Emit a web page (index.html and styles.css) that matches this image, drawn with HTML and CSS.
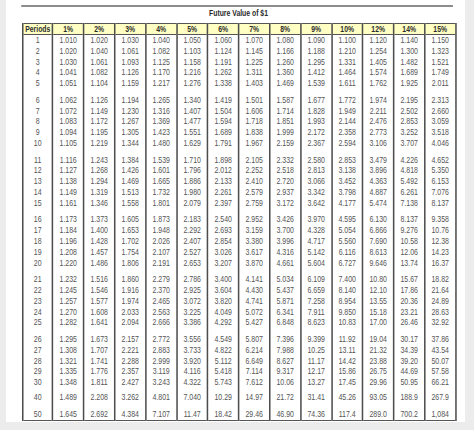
FILE: index.html
```html
<!DOCTYPE html>
<html>
<head>
<meta charset="utf-8">
<link rel="stylesheet" href="styles.css">
</head>
<body>
<div class="panel">
  <div class="sheet">
  <div class="rule"></div>
  <div class="title">Future Value of $1</div>
  <table class="fv">
    <colgroup><col class="cp"><col span="13" class="cr"></colgroup>
    <thead>
      <tr><th>Periods</th><th>1%</th><th>2%</th><th>3%</th><th>4%</th><th>5%</th><th>6%</th><th>7%</th><th>8%</th><th>9%</th><th>10%</th><th>12%</th><th>14%</th><th>15%</th></tr>
    </thead>
    <tbody>
      <tr><td>1</td><td>1.010</td><td>1.020</td><td>1.030</td><td>1.040</td><td>1.050</td><td>1.060</td><td>1.070</td><td>1.080</td><td>1.090</td><td>1.100</td><td>1.120</td><td>1.140</td><td>1.150</td></tr>
      <tr><td>2</td><td>1.020</td><td>1.040</td><td>1.061</td><td>1.082</td><td>1.103</td><td>1.124</td><td>1.145</td><td>1.166</td><td>1.188</td><td>1.210</td><td>1.254</td><td>1.300</td><td>1.323</td></tr>
      <tr><td>3</td><td>1.030</td><td>1.061</td><td>1.093</td><td>1.125</td><td>1.158</td><td>1.191</td><td>1.225</td><td>1.260</td><td>1.295</td><td>1.331</td><td>1.405</td><td>1.482</td><td>1.521</td></tr>
      <tr><td>4</td><td>1.041</td><td>1.082</td><td>1.126</td><td>1.170</td><td>1.216</td><td>1.262</td><td>1.311</td><td>1.360</td><td>1.412</td><td>1.464</td><td>1.574</td><td>1.689</td><td>1.749</td></tr>
      <tr><td>5</td><td>1.051</td><td>1.104</td><td>1.159</td><td>1.217</td><td>1.276</td><td>1.338</td><td>1.403</td><td>1.469</td><td>1.539</td><td>1.611</td><td>1.762</td><td>1.925</td><td>2.011</td></tr>
      <tr class="gs"><td>6</td><td>1.062</td><td>1.126</td><td>1.194</td><td>1.265</td><td>1.340</td><td>1.419</td><td>1.501</td><td>1.587</td><td>1.677</td><td>1.772</td><td>1.974</td><td>2.195</td><td>2.313</td></tr>
      <tr><td>7</td><td>1.072</td><td>1.149</td><td>1.230</td><td>1.316</td><td>1.407</td><td>1.504</td><td>1.606</td><td>1.714</td><td>1.828</td><td>1.949</td><td>2.211</td><td>2.502</td><td>2.660</td></tr>
      <tr><td>8</td><td>1.083</td><td>1.172</td><td>1.267</td><td>1.369</td><td>1.477</td><td>1.594</td><td>1.718</td><td>1.851</td><td>1.993</td><td>2.144</td><td>2.476</td><td>2.853</td><td>3.059</td></tr>
      <tr><td>9</td><td>1.094</td><td>1.195</td><td>1.305</td><td>1.423</td><td>1.551</td><td>1.689</td><td>1.838</td><td>1.999</td><td>2.172</td><td>2.358</td><td>2.773</td><td>3.252</td><td>3.518</td></tr>
      <tr><td>10</td><td>1.105</td><td>1.219</td><td>1.344</td><td>1.480</td><td>1.629</td><td>1.791</td><td>1.967</td><td>2.159</td><td>2.367</td><td>2.594</td><td>3.106</td><td>3.707</td><td>4.046</td></tr>
      <tr class="gs"><td>11</td><td>1.116</td><td>1.243</td><td>1.384</td><td>1.539</td><td>1.710</td><td>1.898</td><td>2.105</td><td>2.332</td><td>2.580</td><td>2.853</td><td>3.479</td><td>4.226</td><td>4.652</td></tr>
      <tr><td>12</td><td>1.127</td><td>1.268</td><td>1.426</td><td>1.601</td><td>1.796</td><td>2.012</td><td>2.252</td><td>2.518</td><td>2.813</td><td>3.138</td><td>3.896</td><td>4.818</td><td>5.350</td></tr>
      <tr><td>13</td><td>1.138</td><td>1.294</td><td>1.469</td><td>1.665</td><td>1.886</td><td>2.133</td><td>2.410</td><td>2.720</td><td>3.066</td><td>3.452</td><td>4.363</td><td>5.492</td><td>6.153</td></tr>
      <tr><td>14</td><td>1.149</td><td>1.319</td><td>1.513</td><td>1.732</td><td>1.980</td><td>2.261</td><td>2.579</td><td>2.937</td><td>3.342</td><td>3.798</td><td>4.887</td><td>6.261</td><td>7.076</td></tr>
      <tr><td>15</td><td>1.161</td><td>1.346</td><td>1.558</td><td>1.801</td><td>2.079</td><td>2.397</td><td>2.759</td><td>3.172</td><td>3.642</td><td>4.177</td><td>5.474</td><td>7.138</td><td>8.137</td></tr>
      <tr class="gs"><td>16</td><td>1.173</td><td>1.373</td><td>1.605</td><td>1.873</td><td>2.183</td><td>2.540</td><td>2.952</td><td>3.426</td><td>3.970</td><td>4.595</td><td>6.130</td><td>8.137</td><td>9.358</td></tr>
      <tr><td>17</td><td>1.184</td><td>1.400</td><td>1.653</td><td>1.948</td><td>2.292</td><td>2.693</td><td>3.159</td><td>3.700</td><td>4.328</td><td>5.054</td><td>6.866</td><td>9.276</td><td>10.76</td></tr>
      <tr><td>18</td><td>1.196</td><td>1.428</td><td>1.702</td><td>2.026</td><td>2.407</td><td>2.854</td><td>3.380</td><td>3.996</td><td>4.717</td><td>5.560</td><td>7.690</td><td>10.58</td><td>12.38</td></tr>
      <tr><td>19</td><td>1.208</td><td>1.457</td><td>1.754</td><td>2.107</td><td>2.527</td><td>3.026</td><td>3.617</td><td>4.316</td><td>5.142</td><td>6.116</td><td>8.613</td><td>12.06</td><td>14.23</td></tr>
      <tr><td>20</td><td>1.220</td><td>1.486</td><td>1.806</td><td>2.191</td><td>2.653</td><td>3.207</td><td>3.870</td><td>4.661</td><td>5.604</td><td>6.727</td><td>9.646</td><td>13.74</td><td>16.37</td></tr>
      <tr class="gs"><td>21</td><td>1.232</td><td>1.516</td><td>1.860</td><td>2.279</td><td>2.786</td><td>3.400</td><td>4.141</td><td>5.034</td><td>6.109</td><td>7.400</td><td>10.80</td><td>15.67</td><td>18.82</td></tr>
      <tr><td>22</td><td>1.245</td><td>1.546</td><td>1.916</td><td>2.370</td><td>2.925</td><td>3.604</td><td>4.430</td><td>5.437</td><td>6.659</td><td>8.140</td><td>12.10</td><td>17.86</td><td>21.64</td></tr>
      <tr><td>23</td><td>1.257</td><td>1.577</td><td>1.974</td><td>2.465</td><td>3.072</td><td>3.820</td><td>4.741</td><td>5.871</td><td>7.258</td><td>8.954</td><td>13.55</td><td>20.36</td><td>24.89</td></tr>
      <tr><td>24</td><td>1.270</td><td>1.608</td><td>2.033</td><td>2.563</td><td>3.225</td><td>4.049</td><td>5.072</td><td>6.341</td><td>7.911</td><td>9.850</td><td>15.18</td><td>23.21</td><td>28.63</td></tr>
      <tr><td>25</td><td>1.282</td><td>1.641</td><td>2.094</td><td>2.666</td><td>3.386</td><td>4.292</td><td>5.427</td><td>6.848</td><td>8.623</td><td>10.83</td><td>17.00</td><td>26.46</td><td>32.92</td></tr>
      <tr class="gs"><td>26</td><td>1.295</td><td>1.673</td><td>2.157</td><td>2.772</td><td>3.556</td><td>4.549</td><td>5.807</td><td>7.396</td><td>9.399</td><td>11.92</td><td>19.04</td><td>30.17</td><td>37.86</td></tr>
      <tr><td>27</td><td>1.308</td><td>1.707</td><td>2.221</td><td>2.883</td><td>3.733</td><td>4.822</td><td>6.214</td><td>7.988</td><td>10.25</td><td>13.11</td><td>21.32</td><td>34.39</td><td>43.54</td></tr>
      <tr><td>28</td><td>1.321</td><td>1.741</td><td>2.288</td><td>2.999</td><td>3.920</td><td>5.112</td><td>6.649</td><td>8.627</td><td>11.17</td><td>14.42</td><td>23.88</td><td>39.20</td><td>50.07</td></tr>
      <tr><td>29</td><td>1.335</td><td>1.776</td><td>2.357</td><td>3.119</td><td>4.116</td><td>5.418</td><td>7.114</td><td>9.317</td><td>12.17</td><td>15.86</td><td>26.75</td><td>44.69</td><td>57.58</td></tr>
      <tr><td>30</td><td>1.348</td><td>1.811</td><td>2.427</td><td>3.243</td><td>4.322</td><td>5.743</td><td>7.612</td><td>10.06</td><td>13.27</td><td>17.45</td><td>29.96</td><td>50.95</td><td>66.21</td></tr>
      <tr class="g40"><td>40</td><td>1.489</td><td>2.208</td><td>3.262</td><td>4.801</td><td>7.040</td><td>10.29</td><td>14.97</td><td>21.72</td><td>31.41</td><td>45.26</td><td>93.05</td><td>188.9</td><td>267.9</td></tr>
      <tr class="g50"><td>50</td><td>1.645</td><td>2.692</td><td>4.384</td><td>7.107</td><td>11.47</td><td>18.42</td><td>29.46</td><td>46.90</td><td>74.36</td><td>117.4</td><td>289.0</td><td>700.2</td><td>1,084</td></tr>
    </tbody>
  </table>
  </div>
</div>
</body>
</html>
```
FILE: styles.css
```css
html, body {
  margin: 0;
  padding: 0;
  background: #ececec;
}
body {
  width: 474px;
  height: 430px;
  overflow: hidden;
  font-family: "Liberation Sans", Arial, sans-serif;
}
.panel {
  margin-left: 6px;
  width: 459px;
  height: 422px;
  background: #ffffff;
  padding-top: 5px;
  padding-left: 16px;
  box-sizing: border-box;
  overflow: hidden;
}
/* the source table is set in a horizontally condensed face;
   scale the whole sheet horizontally: 433px visible = 569.74px layout */
.sheet {
  width: 569.74px;
  transform: scaleX(0.76);
  transform-origin: 0 0;
}
.rule {
  margin-left: -1.3px;
  width: 568.4px;
  height: 0;
  border-top: 2px solid #8c8c8c;
}
.title {
  text-align: center;
  font-weight: bold;
  font-size: 9px;
  line-height: 12px;
  height: 12px;
  color: #2a2a2a;
}
.fv {
  margin-top: 4px;
  border-collapse: collapse;
  table-layout: fixed;
  width: 569.74px;
  font-size: 9.2px;
  color: #555555;
}
.cp { width: 39.47px; }
.cr { width: 40.79px; }
.fv th {
  background: #ffffc4;
  font-weight: bold;
  color: #2e2e2e;
  height: 10px;
  line-height: 10px;
  padding: 0;
  border-top: 1px solid #555;
  border-bottom: 1px solid #555;
  border-left: 2px solid #4d4d4d;
  border-right: 2px solid #4d4d4d;
  text-align: center;
  font-size: 9px;
}
.fv td {
  height: 10.8px;
  line-height: 10.8px;
  padding: 0;
  text-align: center;
  border-left: 2px solid #4d4d4d;
  border-right: 2px solid #4d4d4d;
  white-space: nowrap;
}
.fv tr.gs td { padding-top: 5.8px; }
.fv tr.g40 td { padding-top: 4.2px; }
.fv tr.g50 td { padding-top: 6.2px; border-bottom: 1px solid #555; }
```
